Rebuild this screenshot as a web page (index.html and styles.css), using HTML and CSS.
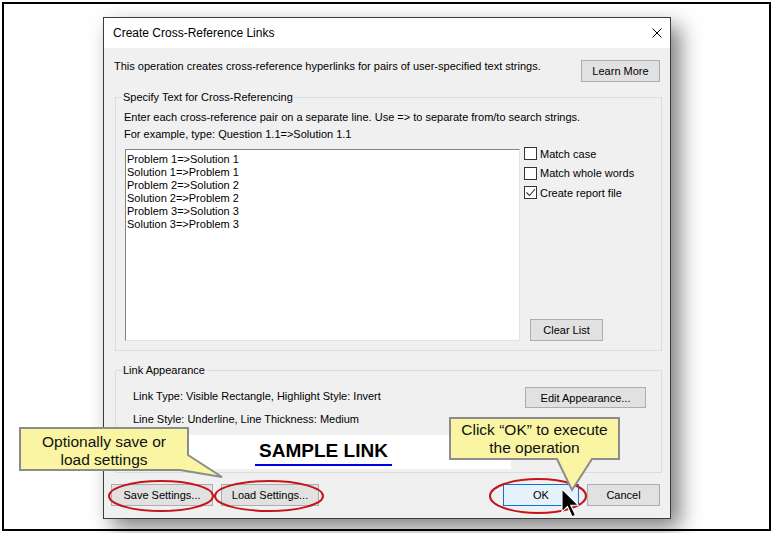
FILE: index.html
```html
<!DOCTYPE html>
<html lang="en">
<head>
  <meta charset="UTF-8">
  <title>Create Cross-Reference Links</title>
  <link rel="stylesheet" href="styles.css">
</head>
<body>

<div class="screen">
  <!-- dialog window -->
  <div class="dialog">
    <div class="titlebar">
      <span>Create Cross-Reference Links</span>
      <svg class="close" width="10" height="10" viewBox="0 0 10 10">
        <path d="M0.5 0.5 L9.5 9.5 M9.5 0.5 L0.5 9.5" stroke="#000" stroke-width="1" fill="none"/>
      </svg>
    </div>
    <div class="body">
      <div class="intro">
        <p>This operation creates cross-reference hyperlinks for pairs of user-specified text strings.</p>
        <button class="btn btn-learn">Learn More</button>
      </div>

      <fieldset class="group group-text">
        <legend>Specify Text for Cross-Referencing</legend>
        <p class="hint first">Enter each cross-reference pair on a separate line. Use =&gt; to separate from/to search strings.</p>
        <p class="hint">For example, type: Question 1.1=&gt;Solution 1.1</p>
        <div class="pairs">
          <textarea class="list" readonly>Problem 1=>Solution 1
Solution 1=>Problem 1
Problem 2=>Solution 2
Solution 2=>Problem 2
Problem 3=>Solution 3
Solution 3=>Problem 3</textarea>
          <div class="options">
            <label class="check"><span class="box"></span>Match case</label>
            <label class="check"><span class="box"></span>Match whole words</label>
            <label class="check"><span class="box">
              <svg width="11" height="11" viewBox="0 0 11 11"><path d="M1.5 5.5 L4.5 8.5 L10 2" stroke="#333" stroke-width="1.1" fill="none"/></svg>
            </span>Create report file</label>
            <button class="btn btn-clear">Clear List</button>
          </div>
        </div>
      </fieldset>

      <fieldset class="group group-link">
        <legend>Link Appearance</legend>
        <div class="link-row">
          <div class="link-info">
            <p class="first">Link Type: Visible Rectangle, Highlight Style: Invert</p>
            <p>Line Style: Underline, Line Thickness: Medium</p>
          </div>
          <button class="btn btn-edit">Edit Appearance...</button>
        </div>
        <div class="sample"><span>SAMPLE LINK</span></div>
      </fieldset>

      <div class="footer">
        <button class="btn btn-save">Save Settings...</button>
        <button class="btn btn-load">Load Settings...</button>
        <span class="spacer"></span>
        <button class="btn btn-ok">OK</button>
        <button class="btn btn-cancel">Cancel</button>
      </div>
    </div>
  </div>

  <!-- annotations drawn over the dialog -->
  <svg class="marks" width="773" height="533" viewBox="0 0 773 533">
    <g fill="none" stroke="#c4151c" stroke-width="2">
      <ellipse cx="161" cy="496" rx="52" ry="15"/>
      <ellipse cx="269" cy="496" rx="54" ry="15"/>
      <ellipse cx="538" cy="496" rx="48" ry="17"/>
    </g>
    <g fill="#f9f5a3" stroke="#8c8c8c" stroke-width="2" stroke-linejoin="miter">
      <path d="M20 428 H188 V455 L222 477 L180 470 H20 Z"/>
      <path d="M450 418 H619 V459 H592 L572 490 L557 459 H450 Z"/>
    </g>
    <path transform="translate(562 489) scale(1.35)" d="M0 0 L0 17 L4 13 L7.5 20.5 L10 19.5 L6.5 12 L12 12 Z" fill="#000" stroke="#fff" stroke-width="0.8"/>
  </svg>
  <div class="callout callout-save">Optionally save or<br>load settings</div>
  <div class="callout callout-ok">Click “OK” to execute<br>the operation</div>
</div>

</body>
</html>
```

FILE: styles.css
```css
* { margin: 0; padding: 0; box-sizing: border-box; }
body { background: #fff; color: #000;
  font-family: "Liberation Sans", Arial, sans-serif; font-size: 11px; }

.screen { position: relative; width: 769px; height: 529px; margin: 2px;
  border: 2px solid #000; padding: 13px 0 0 99px; }

/* window */
.dialog { width: 568px; height: 502px; border: 1px solid #3c3c3c;
  background: #f0f0f0; display: flex; flex-direction: column;
  box-shadow: 9px 9px 20px rgba(0,0,0,.5); }
.titlebar { height: 30px; background: #fff; display: flex;
  align-items: center; justify-content: space-between;
  padding: 0 8px 0 9px; font-size: 12px; }
.body { flex: 1; padding: 11px 8px 0 7px; }

.btn { display: flex; align-items: center; justify-content: center;
  height: 22px; background: #e1e1e1; border: 1px solid #adadad;
  font-family: inherit; font-size: 11px; color: #000; }

.intro { display: flex; justify-content: space-between;
  margin: 0 2px 0 3px; }
.intro p { line-height: 14px; }
.btn-learn { width: 79px; margin-top: 1px; }

/* group boxes */
.group { border: 1px solid #dcdcdc; margin: 8px 0 0 4px;
  padding: 0 8px 9px 8px; }
.group legend { padding: 0 1px; margin-left: -2px; line-height: 14px; }
.hint { line-height: 17px; }
.hint.first { margin-top: 5px; }

.pairs { display: flex; margin-top: 6px; }
.list { width: 395px; height: 192px; margin-left: 1px; resize: none;
  border: 1px solid; border-color: #828282 #e3e3e3 #e3e3e3 #828282;
  font-family: "Liberation Sans", Arial, sans-serif; font-size: 11px;
  line-height: 13px; padding: 3px 1px 1px; color: #000; background: #fff;
  outline: none; overflow: hidden; }
.options { flex: 1; display: flex; flex-direction: column;
  margin: -2px 0 0 4px; }
.check { display: flex; align-items: center; gap: 3px; height: 13px;
  margin-bottom: 6.5px; }
.box { width: 13px; height: 13px; border: 1px solid #333; background: #fff;
  display: flex; align-items: center; justify-content: center; }
.btn-clear { width: 73px; margin: auto 0 0 6px; }

.group-link { margin-top: 12px; padding-bottom: 3px; }
.link-row { display: flex; justify-content: space-between; }
.link-info { margin-left: 9px; }
.link-info p { line-height: 16px; margin-top: 7px; }
.link-info p.first { margin-top: 11px; }
.btn-edit { width: 121px; height: 21px; margin: 10px 7px 0 0; }
.sample { width: 386px; height: 34px; margin: 8px 0 0 1px; background: #fff;
  display: flex; justify-content: center; padding: 6px 0 0 11px; }
.sample span { font-weight: bold; font-size: 19px; line-height: 20px;
  height: 25px; padding: 0 4px; border-bottom: 2px solid #0000e6; }

.footer { display: flex; gap: 8px; margin: 11px 2px 0 0; }
.spacer { flex: 1; }
.btn-save { width: 102px; }
.btn-load { width: 98px; }
.btn-ok { width: 76px; background: #e5f1fb; border-color: #0078d7; }
.btn-cancel { width: 73px; }

/* annotations */
.marks { position: absolute; left: -4px; top: -4px; pointer-events: none; }
.callout { position: absolute; display: flex; align-items: center;
  justify-content: center; text-align: center; font-size: 15.5px;
  line-height: 18px; height: 42px; color: #111; }
.callout-save { left: 16px; top: 424px; width: 168px; padding-top: 3px; }
.callout-ok { left: 446px; top: 414px; width: 169px; }
```
